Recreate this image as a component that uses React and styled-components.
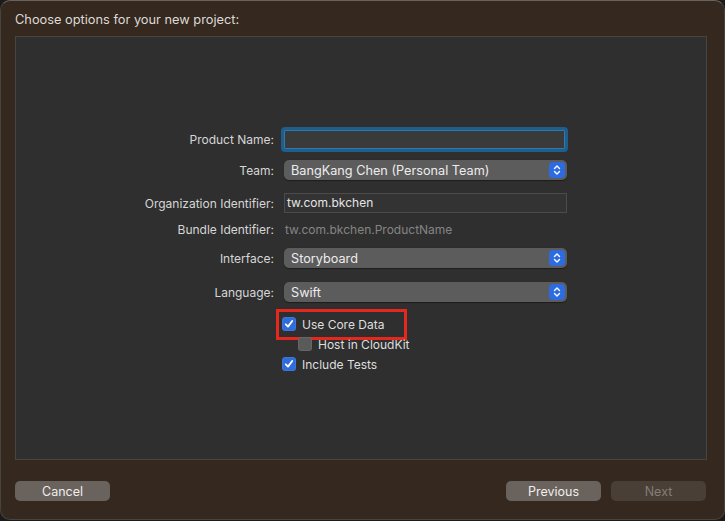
import React from "react";
import styled, { createGlobalStyle } from "styled-components";

const Global = createGlobalStyle`
  html, body {
    margin: 0;
    padding: 0;
    background: #1b1b1b;
  }
  * {
    box-sizing: border-box;
  }
`;

const Window = styled.div`
  width: 725px;
  height: 520px;
  background: #34281f;
  border: 1px solid #4a423c;
  border-top-color: #6a625c;
  border-radius: 10px;
  display: flex;
  flex-direction: column;
  padding: 0 17px 0 14px;
  font-family: Inter, "Liberation Sans", sans-serif;
  font-size: 12px;
  color: #dcdcdc;
  overflow: hidden;
`;

const Title = styled.div`
  height: 35px;
  padding-top: 11px;
  line-height: 16px;
  font-size: 12.8px;
  color: #dedad6;
`;

const Panel = styled.div`
  flex: none;
  height: 424px;
  background: #2f2f2f;
  border: 1px solid #474542;
  padding-top: 90px;
`;

const Row = styled.div`
  display: grid;
  grid-template-columns: 258px 284px;
  column-gap: 9px;
  align-items: center;
  height: ${(p) => p.$h || 20}px;
  margin-top: ${(p) => p.$top || 0}px;
  position: relative;
`;

const Label = styled.div`
  text-align: right;
  color: #d6d6d6;
  white-space: nowrap;
`;

const FocusField = styled.div`
  height: 25px;
  margin: 0 -1px 0 -2px;
  border: 3px solid #1f5d8c;
  border-radius: 4px;
  background: #3a3a3a;
  box-shadow: inset 0 0 0 1px #2b7bb3;
`;

const TextField = styled.div`
  height: 20px;
  margin-left: 1px;
  background: #333333;
  border: 1px solid #4b4b4b;
  padding: 0 2px;
  line-height: 18px;
  color: #e6e6e6;
`;

const PlainValue = styled.div`
  padding-left: 2px;
  color: #858585;
`;

const Popup = styled.div`
  height: 20px;
  margin-left: 1px;
  background: #5c5c5c;
  border-radius: 5px;
  display: flex;
  align-items: center;
  justify-content: space-between;
  padding: 0 2px 0 7px;
  font-size: 12.7px;
  color: #ececec;
  box-shadow: 0 0.5px 1px rgba(0, 0, 0, 0.4);
`;

const Stepper = styled.div`
  width: 16px;
  height: 16px;
  border-radius: 4px;
  background: #2c6be0;
  display: flex;
  align-items: center;
  justify-content: center;
`;

const CheckRow = styled.label`
  display: flex;
  align-items: center;
  gap: 6px;
  margin-left: -1px;
  padding-left: ${(p) => p.$indent || 0}px;
  color: #dedede;
  white-space: nowrap;
  grid-column: 2;
  position: relative;
`;

const Box = styled.span`
  width: 14px;
  height: 14px;
  border-radius: 3.5px;
  flex: none;
  display: flex;
  align-items: center;
  justify-content: center;
  background: ${(p) => (p.$checked ? "#2e6ddb" : "#5a5a5a")};
  box-shadow: inset 0 0 0 0.5px rgba(255, 255, 255, 0.15);
`;

const Highlight = styled.div`
  position: absolute;
  left: -6px;
  top: -8px;
  width: 131px;
  height: 31px;
  border: 3px solid #e4281d;
  pointer-events: none;
`;

const Footer = styled.div`
  display: flex;
  align-items: center;
  gap: 10px;
  margin-top: 21px;
  padding-right: 1px;
`;

const Spacer = styled.div`
  flex: 1;
`;

const Button = styled.button`
  width: 95px;
  height: 20px;
  border: none;
  border-radius: 5px;
  font-family: inherit;
  font-size: 12.5px;
  background: ${(p) => (p.disabled ? "#4a3f37" : "#6a625c")};
  color: ${(p) => (p.disabled ? "#857c75" : "#f0eeec")};
  padding: 0;
`;

function Chevrons() {
  return (
    <svg width="8" height="12" viewBox="0 0 8 12" fill="none">
      <path
        d="M1.5 4.5 L4 2 L6.5 4.5 M1.5 7.5 L4 10 L6.5 7.5"
        stroke="#ffffff"
        strokeWidth="1.4"
        strokeLinecap="round"
        strokeLinejoin="round"
      />
    </svg>
  );
}

function Check() {
  return (
    <svg width="10" height="10" viewBox="0 0 10 10" fill="none">
      <path
        d="M1.8 5.3 L4 7.6 L8.2 2"
        stroke="#ffffff"
        strokeWidth="1.8"
        strokeLinecap="round"
        strokeLinejoin="round"
      />
    </svg>
  );
}

function Select({ value }) {
  return (
    <Popup>
      <span>{value}</span>
      <Stepper>
        <Chevrons />
      </Stepper>
    </Popup>
  );
}

function Checkbox({ checked, indent, children }) {
  return (
    <CheckRow $indent={indent}>
      <Box $checked={checked}>{checked && <Check />}</Box>
      {children}
    </CheckRow>
  );
}

export default function App() {
  return (
    <>
      <Global />
      <Window>
        <Title>Choose options for your new project:</Title>
        <Panel>
          <Row $h={24}>
            <Label>Product Name:</Label>
            <FocusField />
          </Row>
          <Row $top={9}>
            <Label>Team:</Label>
            <Select value="BangKang Chen (Personal Team)" />
          </Row>
          <Row $top={13}>
            <Label>Organization Identifier:</Label>
            <TextField>tw.com.bkchen</TextField>
          </Row>
          <Row $top={6}>
            <Label>Bundle Identifier:</Label>
            <PlainValue>tw.com.bkchen.ProductName</PlainValue>
          </Row>
          <Row $top={9}>
            <Label>Interface:</Label>
            <Select value="Storyboard" />
          </Row>
          <Row $top={14}>
            <Label>Language:</Label>
            <Select value="Swift" />
          </Row>
          <Row $top={12}>
            <Checkbox checked>
              Use Core Data
              <Highlight />
            </Checkbox>
          </Row>
          <Row>
            <Checkbox indent={16}>Host in CloudKit</Checkbox>
          </Row>
          <Row>
            <Checkbox checked>Include Tests</Checkbox>
          </Row>
        </Panel>
        <Footer>
          <Button>Cancel</Button>
          <Spacer />
          <Button>Previous</Button>
          <Button disabled>Next</Button>
        </Footer>
      </Window>
    </>
  );
}
